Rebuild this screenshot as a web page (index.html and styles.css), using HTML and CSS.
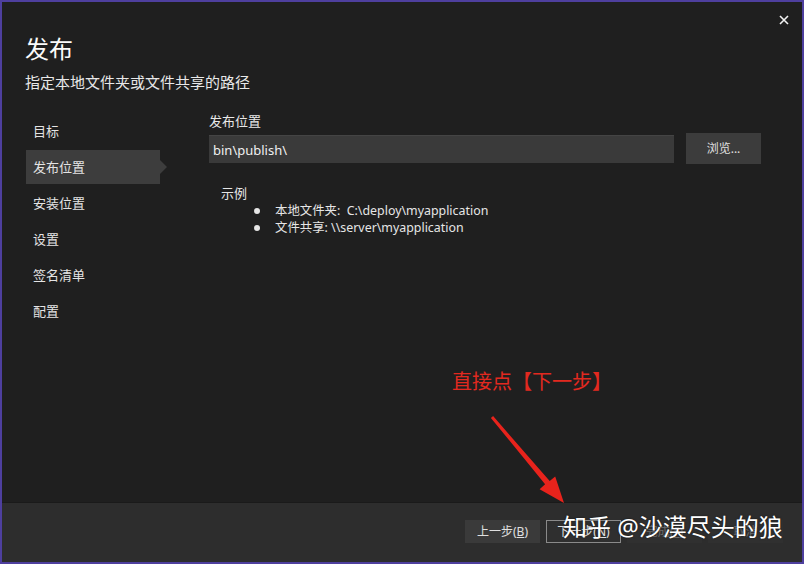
FILE: index.html
```html
<!DOCTYPE html>
<html lang="zh-CN">
<head>
  <meta charset="UTF-8" />
  <title>发布</title>
  <link rel="stylesheet" href="styles.css">
</head>
<body>

<div class="window">
  <div class="close">
    <svg width="10" height="10" viewBox="0 0 10 10"><path d="M1 1L9 9M9 1L1 9" stroke="#f2f2f2" stroke-width="1.6"/></svg>
  </div>

  <header class="head">
    <h1>发布</h1>
    <p>指定本地文件夹或文件共享的路径</p>
  </header>

  <div class="main">
    <nav class="steps">
      <div class="step">目标</div>
      <div class="step active">发布位置</div>
      <div class="step">安装位置</div>
      <div class="step">设置</div>
      <div class="step">签名清单</div>
      <div class="step">配置</div>
    </nav>

    <section class="pane">
      <div class="label">发布位置</div>
      <div class="path-row">
        <div class="path-input">bin\publish\</div>
        <div class="btn browse">浏览...</div>
      </div>
      <div class="examples">
        <div class="ex-title">示例</div>
        <ul>
          <li>本地文件夹:&nbsp; C:\deploy\myapplication</li>
          <li>文件共享: \\server\myapplication</li>
        </ul>
      </div>
    </section>
  </div>

  <footer class="foot">
    <div class="btn">上一步(<u>B</u>)</div>
    <div class="btn focused">下一步(<u>N</u>)</div>
    <div class="btn dim">完成(<u>F</u>)</div>
    <div class="btn dim">取消</div>
  </footer>

  <div class="note">直接点【下一步】</div>
  <svg class="arrow" width="804" height="564" viewBox="0 0 804 564">
    <polygon points="490.9,417.9 545.1,484.3 539.6,489.2 564,503 555.2,476.6 549.7,481.1 493.1,416.1" fill="#e8231c"/>
  </svg>
  <div class="mark">知乎 @沙漠尽头的狼</div>
</div>

</body>
</html>
```

FILE: styles.css
```css
body {
  margin: 0;
  background: #1f1f1f;
  font-family: "Noto Sans", "Noto Sans CJK SC", sans-serif;
  color: #e6e6e6;
}
.window {
  position: relative;
  width: 804px;
  height: 564px;
  box-sizing: border-box;
  border: 2px solid #4e3f9e;
  background: #1f1f1f;
  display: flex;
  flex-direction: column;
  overflow: hidden;
}
.close {
  position: absolute;
  top: 13px;
  right: 13px;
  width: 10px;
  height: 10px;
  display: flex;
}

.head {
  padding: 31px 0 0 23px;
  height: 59px;
}
.head h1 {
  margin: 0;
  font-size: 24px;
  line-height: 32px;
  font-weight: normal;
  color: #fafafa;
}
.head p {
  margin: 7px 0 0;
  font-size: 15px;
  line-height: 20px;
  color: #e8e8e8;
}

.main {
  flex: 1;
  display: flex;
  padding-top: 20px;
}
.steps {
  width: 134px;
  margin: 2px 0 0 24px;
  display: flex;
  flex-direction: column;
  gap: 2px;
}
.step {
  position: relative;
  height: 34px;
  line-height: 34px;
  padding-left: 7px;
  font-size: 13px;
  color: #e4e4e4;
}
.step.active {
  background: #3d3d3d;
}
.step.active::after {
  content: "";
  position: absolute;
  right: -7px;
  top: 10px;
  border-left: 7px solid #3d3d3d;
  border-top: 7px solid transparent;
  border-bottom: 7px solid transparent;
}

.pane {
  flex: 1;
  padding-left: 49px;
  padding-right: 41px;
}
.label {
  font-size: 13px;
  line-height: 18px;
  color: #e8e8e8;
}
.path-row {
  display: flex;
  align-items: center;
  gap: 12px;
  margin-top: 3px;
}
.path-input {
  flex: 1;
  height: 28px;
  line-height: 28px;
  box-sizing: border-box;
  padding-left: 4px;
  background: #3a3a3a;
  border-top: 1px solid #444;
  font-size: 13px;
  color: #f0f0f0;
}
.btn {
  width: 75px;
  height: 23px;
  line-height: 23px;
  box-sizing: border-box;
  text-align: center;
  background: #3a3a3a;
  font-size: 12px;
  color: #e0e0e0;
}
.btn.browse {
  height: 31px;
  line-height: 31px;
  background: #3c3c3c;
}

.examples {
  margin-top: 21px;
  padding-left: 12px;
}
.ex-title {
  font-size: 13px;
  line-height: 17px;
}
.examples ul {
  margin: 0;
  padding: 0;
  list-style: none;
}
.examples li {
  display: flex;
  align-items: center;
  font-size: 12.4px;
  line-height: 17px;
  color: #e6e6e6;
}
.examples li::before {
  content: "";
  width: 6px;
  height: 6px;
  border-radius: 50%;
  background: #e6e6e6;
  margin: 0 15px 0 33px;
}

.foot {
  height: 60px;
  box-sizing: border-box;
  background: #2d2d2d;
  border-top: 1px solid #1a1a1a;
  display: flex;
  justify-content: flex-end;
  gap: 6px;
  padding: 17px 19px 0 0;
}
.foot .btn.focused {
  background: #2f2f2f;
  border: 1px solid #8a8a8a;
  line-height: 21px;
}
.foot .btn.dim {
  background: #303030;
  color: #6e6e6e;
}

.note {
  position: absolute;
  left: 450px;
  top: 367px;
  font-size: 20px;
  line-height: 26px;
  color: #e2291f;
}
.arrow {
  position: absolute;
  left: -2px;
  top: -2px;
  pointer-events: none;
}
.mark {
  position: absolute;
  left: 561px;
  top: 510px;
  font-size: 24px;
  line-height: 30px;
  color: #fff;
  white-space: nowrap;
  text-shadow: 0 0 2px rgba(0,0,0,0.6);
}
```
